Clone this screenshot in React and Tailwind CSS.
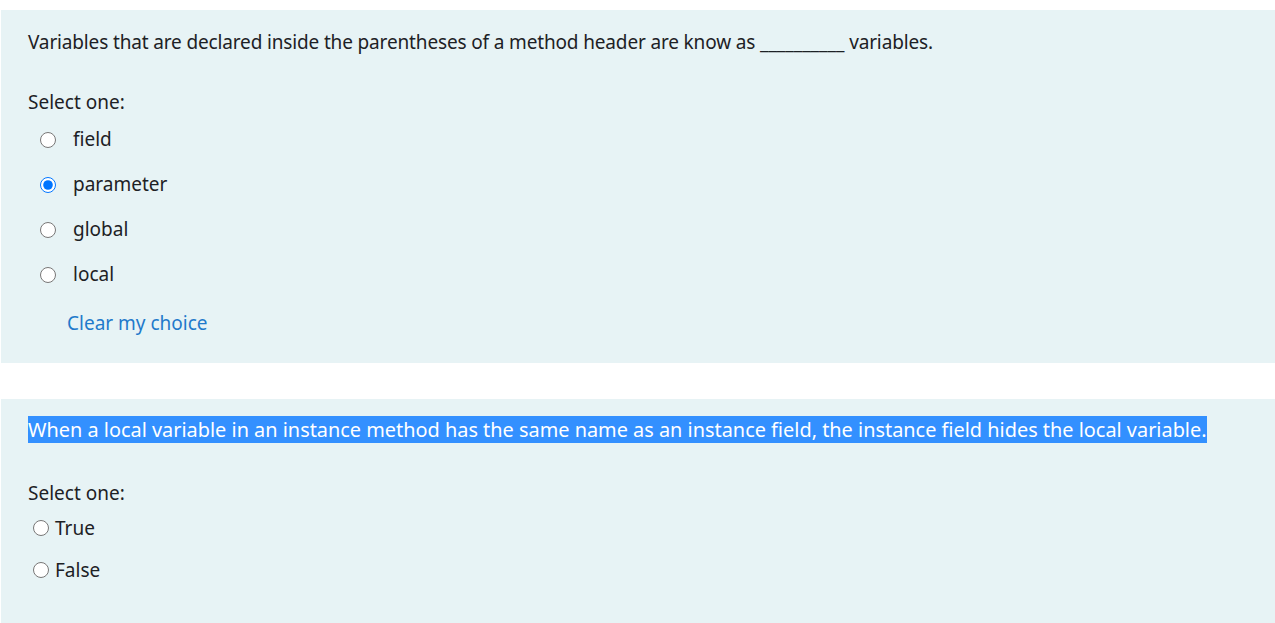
import React, { useState } from "react";

const font = { fontFamily: '"Noto Sans", "Open Sans", sans-serif' };

const Radio = ({ checked, onChange, name }) => (
  <input
    type="radio"
    name={name}
    checked={checked}
    onChange={onChange}
    className="w-[16px] h-[16px] m-0 accent-[#0075ff]"
  />
);

const App = () => {
  const [q1, setQ1] = useState("parameter");
  const [q2, setQ2] = useState("");

  const options = ["field", "parameter", "global", "local"];

  return (
    <div className="bg-white min-h-[623px] text-[#1d2125] text-[19px]" style={font}>
      <div className="h-[10px]" />
      <div className="ml-[1px] bg-[#e7f3f5] px-[27px] pt-[18px] h-[353px]">
        <p className="leading-[28px] h-[28px] whitespace-nowrap tracking-[-0.15px]">
          Variables that are declared inside the parentheses of a method header are know as <span className="tracking-normal">__________</span> variables.
        </p>
        <p className="mt-[32px] leading-[28px]">Select one:</p>
        <div className="mt-[1px]">
          {options.map(o => (
            <label key={o} className="flex items-center h-[45px] pl-[12px] cursor-pointer">
              <Radio name="q1" checked={q1 === o} onChange={() => setQ1(o)} />
              <span className="ml-[17px]">{o}</span>
            </label>
          ))}
        </div>
        <button
          onClick={() => setQ1("")}
          className="ml-[39px] mt-[12px] text-[#1f7acb] leading-[28px]"
        >
          Clear my choice
        </button>
      </div>
      <div className="h-[36px]" />
      <div className="ml-[1px] bg-[#e7f3f5] px-[27px] pt-[16px] h-[224px]">
        <p className="leading-[30px] whitespace-nowrap text-[19.9px]">
          <span className="bg-[#3390ff] text-white">
            When a local variable in an instance method has the same name as an instance field, the instance field hides the local variable.
          </span>
        </p>
        <p className="mt-[34px] leading-[28px]">Select one:</p>
        <div className="mt-[0px]">
          {["True", "False"].map(o => (
            <label key={o} className="flex items-center h-[42px] pl-[5px] cursor-pointer">
              <Radio name="q2" checked={q2 === o} onChange={() => setQ2(o)} />
              <span className="ml-[6px]">{o}</span>
            </label>
          ))}
        </div>
      </div>
    </div>
  );
};

export default App;
